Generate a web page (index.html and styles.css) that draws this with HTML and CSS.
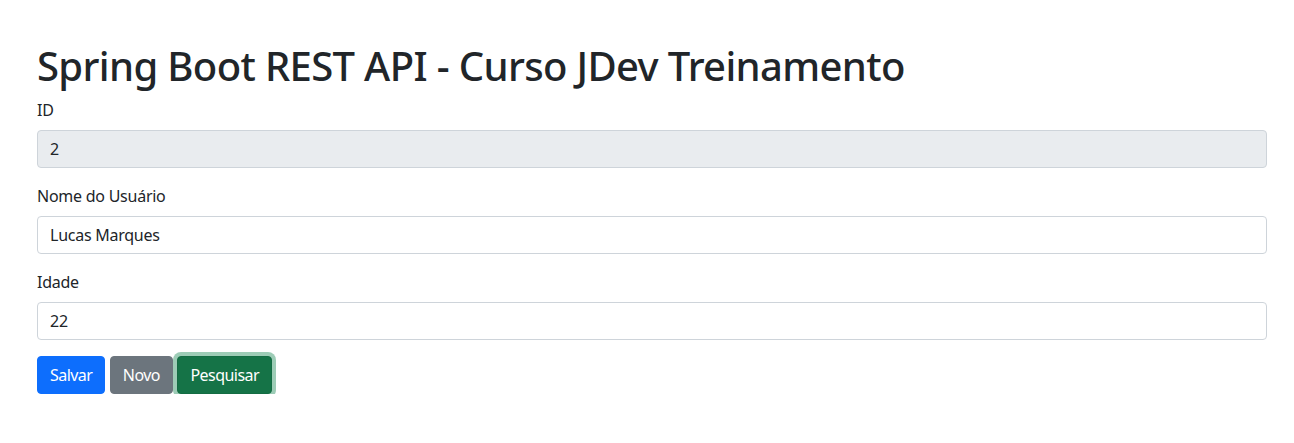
FILE: index.html
```html
<!DOCTYPE html>
<html lang="pt-BR">
<head>
<meta charset="utf-8">
<title>Spring Boot REST API - Curso JDev Treinamento</title>
<link rel="stylesheet" href="styles.css">
</head>
<body>
<div class="page">
  <h1 class="title">Spring Boot REST API - Curso JDev Treinamento</h1>
  <form class="user-form">
    <div class="field">
      <label class="field-label" for="id">ID</label>
      <input class="field-input" id="id" type="text" value="2" disabled>
    </div>
    <div class="field">
      <label class="field-label" for="nome">Nome do Usuário</label>
      <input class="field-input" id="nome" type="text" value="Lucas Marques">
    </div>
    <div class="field">
      <label class="field-label" for="idade">Idade</label>
      <input class="field-input" id="idade" type="text" value="22">
    </div>
    <div class="actions">
      <button type="button" class="btn btn-primary">Salvar</button>
      <button type="button" class="btn btn-secondary">Novo</button>
      <button type="button" class="btn btn-success is-focused">Pesquisar</button>
    </div>
  </form>
</div>
</body>
</html>
```
FILE: styles.css
```css
* { box-sizing: border-box; }

html, body {
  margin: 0;
  background: #fff;
}

body {
  font-family: "Noto Sans", "Open Sans", sans-serif;
  font-size: 16px;
  line-height: 24px;
  color: #212529;
  letter-spacing: -0.25px;
}

.page {
  padding: 42px 27px 0 37px;
}

.title {
  margin: 0 0 8px 0;
  font-size: 40px;
  line-height: 48px;
  font-weight: 500;
  letter-spacing: -0.64px;
  color: #212529;
}

.user-form {
  display: flex;
  flex-direction: column;
}

.field {
  display: flex;
  flex-direction: column;
  margin-bottom: 16px;
}

.field-label {
  margin-bottom: 8px;
  line-height: 24px;
}

.field-input {
  width: 100%;
  height: 38px;
  padding: 6px 12px;
  font: inherit;
  letter-spacing: inherit;
  color: #212529;
  background: #fff;
  border: 1px solid #ced4da;
  border-radius: 4px;
  outline: none;
}

.field-input:disabled {
  background: #e9ecef;
  opacity: 1;
}

.actions {
  display: flex;
  gap: 4.5px;
}

.btn {
  height: 38px;
  padding: 6px 12px;
  font: inherit;
  letter-spacing: -0.55px;
  line-height: 24px;
  color: #fff;
  border: 1px solid transparent;
  border-radius: 4px;
  cursor: pointer;
}

.btn-primary { background: #0d6efd; border-color: #0d6efd; }
.btn-secondary { background: #6c757d; border-color: #6c757d; }
.btn-success { background: #157347; border-color: #146c43; }

.is-focused {
  box-shadow: 0 0 0 4px rgba(60, 153, 110, 0.5);
}
```
